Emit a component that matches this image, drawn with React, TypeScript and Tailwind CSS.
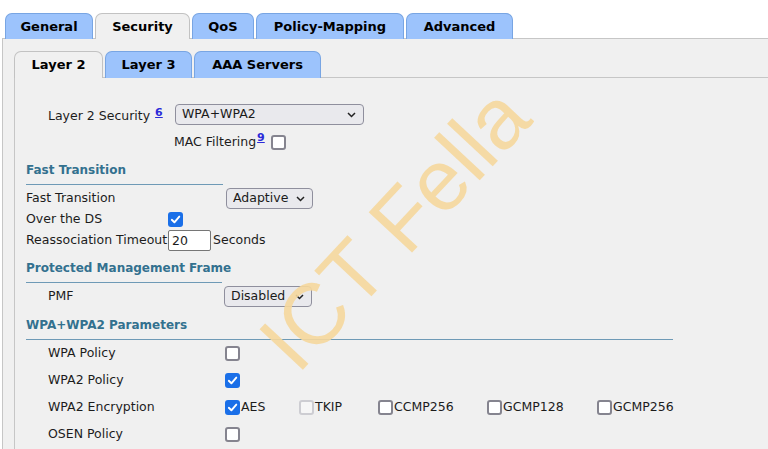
import React from 'react';

const Box = ({ checked = false, disabled = false }: { checked?: boolean; disabled?: boolean }) => (
  <span
    className={
      checked
        ? 'inline-flex shrink-0 w-[15px] h-[15px] rounded-[3px] bg-[#1a6fe8] items-center justify-center'
        : disabled
        ? 'inline-flex shrink-0 w-[15px] h-[15px] rounded-[3px] border-2 border-[#cdcdd2] bg-[#f6f6f6]'
        : 'inline-flex shrink-0 w-[15px] h-[15px] rounded-[3px] border-2 border-[#85848f] bg-white'
    }
  >
    {checked && (
      <svg width="11" height="11" viewBox="0 0 11 11">
        <path d="M1.8 5.8 L4.4 8.3 L9.3 2.6" fill="none" stroke="#fff" strokeWidth="1.9" strokeLinecap="round" strokeLinejoin="round" />
      </svg>
    )}
  </span>
);

const Select = ({ value, width }: { value: string; width: string }) => (
  <div className={`relative ${width} h-[21px]`}>
    <select className="appearance-none w-full h-full rounded-[4px] border border-[#8f8f9d] bg-[#e9e9ed] pl-[6px] text-[12.5px] text-[#1a1a1a] outline-none">
      <option>{value}</option>
    </select>
    <svg className="absolute right-[8px] top-[8px] pointer-events-none" width="9" height="6" viewBox="0 0 9 6">
      <path d="M1 1 L4.5 4.5 L8 1" fill="none" stroke="#222" strokeWidth="1.5" />
    </svg>
  </div>
);

const Heading = ({ children, width }: { children: React.ReactNode; width: string }) => (
  <div className={`${width} whitespace-nowrap border-b border-[#6e9ab6] pb-[7px] text-[12px] leading-[14px] font-bold text-[#33718f]`}>
    {children}
  </div>
);

const Sup = ({ n, space }: { n: string; space?: boolean }) => (
  <a className={`relative -top-[4px] text-[11px] font-bold text-[#2b2bd9] underline ${space ? 'ml-[5px]' : 'ml-[1px]'}`}>{n}</a>
);

const outerTabs = [
  { label: 'General', w: 'w-[88px]' },
  { label: 'Security', w: 'w-[95px]', active: true },
  { label: 'QoS', w: 'w-[62px]' },
  { label: 'Policy-Mapping', w: 'w-[148px]' },
  { label: 'Advanced', w: 'w-[107px]' },
];

const innerTabs = [
  { label: 'Layer 2', w: 'w-[89px]', active: true },
  { label: 'Layer 3', w: 'w-[87px]' },
  { label: 'AAA Servers', w: 'w-[127px]' },
];

const tabClass = (active?: boolean) =>
  active
    ? 'flex items-center justify-center rounded-t-[7px] border border-b-0 border-[#c2c2c2] bg-[#f0f0f0]'
    : 'flex items-center justify-center rounded-t-[7px] border border-b-0 border-[#78a5e3] bg-[#9cc3fc]';

const encryption = [
  { label: 'AES', w: 'w-[74px]', checked: true },
  { label: 'TKIP', w: 'w-[79px]', disabled: true },
  { label: 'CCMP256', w: 'w-[109px]' },
  { label: 'GCMP128', w: 'w-[110px]' },
  { label: 'GCMP256', w: 'w-[110px]' },
];

export default function App() {
  return (
    <div className="relative w-[768px] h-[449px] overflow-hidden bg-white text-[#1c1c1c] font-['DejaVu_Sans',sans-serif]">
      {/* outer tabs */}
      <div className="relative z-10 flex gap-[2px] pl-[5px] pt-[13px] -mb-px">
        {outerTabs.map((t) => (
          <div key={t.label} className={`${tabClass(t.active)} ${t.w} h-[26px] text-[13px] font-bold text-black`}>
            {t.label}
          </div>
        ))}
      </div>

      <div className="ml-[2px] h-full border-l border-t border-[#c6c6c6] bg-[#f0f0f0] pl-[11px] pt-[12px]">
        {/* inner tabs */}
        <div className="relative z-10 flex gap-[2px] -mb-px">
          {innerTabs.map((t) => (
            <div key={t.label} className={`${tabClass(t.active)} ${t.w} h-[27px] text-[13px] font-bold text-black`}>
              {t.label}
            </div>
          ))}
        </div>

        <div className="h-full border-l border-t border-[#c6c6c6] pl-[11px] text-[12.5px]">
          <div className="mt-[26px] flex h-[21px] items-center">
            <div className="w-[149px] pl-[22px] pt-[3px]">
              Layer 2 Security
              <Sup n="6" space />
            </div>
            <Select value="WPA+WPA2" width="w-[189px]" />
          </div>

          <div className="mt-[7px] flex h-[20px] items-center pl-[148px]">
            <span>MAC Filtering</span>
            <Sup n="9" />
            <span className="ml-[6px] flex">
              <Box />
            </span>
          </div>

          <div className="mt-[11px]">
            <Heading width="w-[197px]">Fast Transition</Heading>
          </div>

          <div className="mt-[3px] flex h-[21px] items-center">
            <div className="w-[200px]">Fast Transition</div>
            <Select value="Adaptive" width="w-[87px]" />
          </div>

          <div className="flex h-[20px] items-center">
            <div className="w-[142px]">Over the DS</div>
            <Box checked />
          </div>

          <div className="mt-[1px] flex h-[21px] items-center">
            <div className="w-[142px] whitespace-nowrap">Reassociation Timeout</div>
            <input
              readOnly
              value="20"
              className="h-[21px] w-[43px] rounded-[2px] border border-[#767676] bg-white px-[3px] text-[12.5px] outline-none"
            />
            <span className="ml-[2px]">Seconds</span>
          </div>

          <div className="mt-[10px]">
            <Heading width="w-[196px]">Protected Management Frame</Heading>
          </div>

          <div className="mt-[3px] flex h-[21px] items-center">
            <div className="w-[198px] pl-[22px]">PMF</div>
            <Select value="Disabled" width="w-[88px]" />
          </div>

          <div className="mt-[11px]">
            <Heading width="w-[647px]">WPA+WPA2 Parameters</Heading>
          </div>

          <div className="flex h-[27px] items-center">
            <div className="w-[199px] pl-[22px]">WPA Policy</div>
            <Box />
          </div>
          <div className="flex h-[27px] items-center">
            <div className="w-[199px] pl-[22px]">WPA2 Policy</div>
            <Box checked />
          </div>
          <div className="flex h-[27px] items-center">
            <div className="w-[199px] pl-[22px]">WPA2 Encryption</div>
            {encryption.map((e) => (
              <div key={e.label} className={`flex items-center gap-[1px] ${e.w}`}>
                <Box checked={e.checked} disabled={e.disabled} />
                <span>{e.label}</span>
              </div>
            ))}
          </div>
          <div className="flex h-[27px] items-center">
            <div className="w-[199px] pl-[22px]">OSEN Policy</div>
            <Box />
          </div>
        </div>
      </div>

      {/* watermark */}
      <div className="pointer-events-none absolute left-[394px] top-[228px] -translate-x-1/2 -translate-y-1/2 -rotate-[47deg] whitespace-nowrap font-['Liberation_Sans',sans-serif] text-[86px] leading-none text-[#f5d79c]/90">
        ICT Fella
      </div>
    </div>
  );
}
